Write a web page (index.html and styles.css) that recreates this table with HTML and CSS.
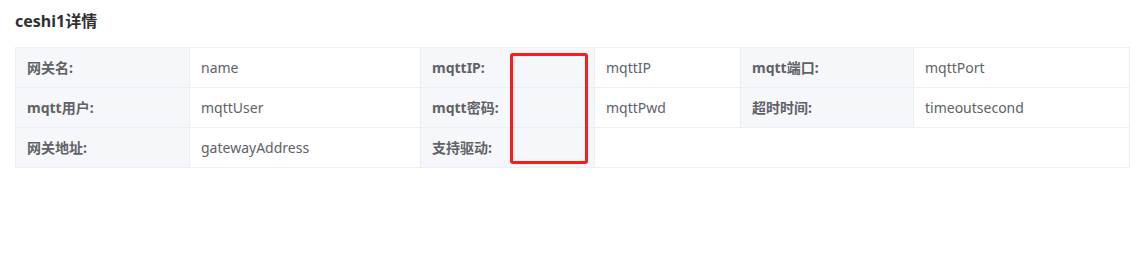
FILE: index.html
```html
<!DOCTYPE html>
<html lang="zh">
<head>
<meta charset="utf-8">
<link rel="stylesheet" href="styles.css">
</head>
<body>
<div class="page">
  <h3 class="title">ceshi1详情</h3>
  <div class="desc-wrap">
    <table class="desc">
      <colgroup>
        <col class="c-l1"><col class="c-v1"><col class="c-l2"><col class="c-v2"><col class="c-l3"><col class="c-v3">
      </colgroup>
      <tr>
        <th>网关名:</th><td>name</td>
        <th>mqttIP:</th><td>mqttIP</td>
        <th>mqtt端口:</th><td>mqttPort</td>
      </tr>
      <tr>
        <th>mqtt用户:</th><td>mqttUser</td>
        <th>mqtt密码:</th><td>mqttPwd</td>
        <th>超时时间:</th><td>timeoutsecond</td>
      </tr>
      <tr>
        <th>网关地址:</th><td>gatewayAddress</td>
        <th>支持驱动:</th><td colspan="3"></td>
      </tr>
    </table>
    <div class="mark"></div>
  </div>
</div>
</body>
</html>
```
FILE: styles.css
```css
html, body {
  margin: 0;
  padding: 0;
  background: #ffffff;
}
body {
  font-family: "Noto Sans", "Noto Sans CJK SC", sans-serif;
  color: #606266;
}
.page {
  padding: 10px 18px 0 15px;
}
.title {
  margin: 0;
  height: 37px;
  font-size: 16px;
  line-height: 22px;
  font-weight: 700;
  color: #303133;
}
.desc-wrap {
  position: relative;
  width: 1115px;
}
.desc {
  width: 1115px;
  table-layout: fixed;
  border-collapse: collapse;
  font-size: 14px;
}
.c-l1 { width: 174px; }
.c-v1 { width: 231px; }
.c-l2 { width: 174px; }
.c-v2 { width: 146px; }
.c-l3 { width: 173px; }
.c-v3 { width: 216px; }
.desc th, .desc td {
  border: 1px solid #ebeef5;
  height: 40px;
  padding: 1px 11px 0;
  text-align: left;
  vertical-align: middle;
  box-sizing: border-box;
  line-height: 20px;
}
.desc th {
  background: #f5f7fa;
  font-weight: 700;
  color: #606266;
}
.desc td {
  background: #ffffff;
  font-weight: 400;
  color: #606266;
}
.mark {
  position: absolute;
  left: 495px;
  top: 6px;
  width: 78px;
  height: 111px;
  box-sizing: border-box;
  border: 3px solid #f81d1d;
  border-radius: 3px;
}
```
